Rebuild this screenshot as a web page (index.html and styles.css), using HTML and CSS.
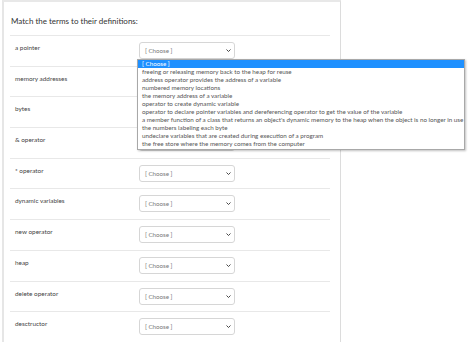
FILE: index.html
```html
<!DOCTYPE html>
<html lang="en">
<head>
    <meta charset="UTF-8">
    <title>Match the terms</title>
    <link rel="stylesheet" href="styles.css">
</head>
<body>

    <div class="question">
        <div class="question-text">Match the terms to their definitions:</div>

        <div class="answer-row">
            <div class="term">a pointer</div>
            <div class="select">[ Choose ]<svg class="chevron" viewBox="0 0 10 6"><path d="M1 1 L5 5 L9 1"/></svg></div>
        </div>
        <div class="answer-row">
            <div class="term">memory addresses</div>
            <div class="select">[ Choose ]<svg class="chevron" viewBox="0 0 10 6"><path d="M1 1 L5 5 L9 1"/></svg></div>
        </div>
        <div class="answer-row">
            <div class="term">bytes</div>
            <div class="select">[ Choose ]<svg class="chevron" viewBox="0 0 10 6"><path d="M1 1 L5 5 L9 1"/></svg></div>
        </div>
        <div class="answer-row">
            <div class="term">&amp; operator</div>
            <div class="select">[ Choose ]<svg class="chevron" viewBox="0 0 10 6"><path d="M1 1 L5 5 L9 1"/></svg></div>
        </div>
        <div class="answer-row">
            <div class="term">* operator</div>
            <div class="select">[ Choose ]<svg class="chevron" viewBox="0 0 10 6"><path d="M1 1 L5 5 L9 1"/></svg></div>
        </div>
        <div class="answer-row">
            <div class="term">dynamic variables</div>
            <div class="select">[ Choose ]<svg class="chevron" viewBox="0 0 10 6"><path d="M1 1 L5 5 L9 1"/></svg></div>
        </div>
        <div class="answer-row">
            <div class="term">new operator</div>
            <div class="select">[ Choose ]<svg class="chevron" viewBox="0 0 10 6"><path d="M1 1 L5 5 L9 1"/></svg></div>
        </div>
        <div class="answer-row">
            <div class="term">heap</div>
            <div class="select">[ Choose ]<svg class="chevron" viewBox="0 0 10 6"><path d="M1 1 L5 5 L9 1"/></svg></div>
        </div>
        <div class="answer-row">
            <div class="term">delete operator</div>
            <div class="select">[ Choose ]<svg class="chevron" viewBox="0 0 10 6"><path d="M1 1 L5 5 L9 1"/></svg></div>
        </div>
        <div class="answer-row">
            <div class="term">desctructor</div>
            <div class="select">[ Choose ]<svg class="chevron" viewBox="0 0 10 6"><path d="M1 1 L5 5 L9 1"/></svg></div>
        </div>
    </div>

    <ul class="dropdown">
        <li class="selected">[ Choose ]</li>
        <li>freeing or releasing memory back to the heap for reuse</li>
        <li>address operator provides the address of a variable</li>
        <li>numbered memory locations</li>
        <li>the memory address of a variable</li>
        <li>operator to create dynamic variable</li>
        <li>operator to declare pointer variables and dereferencing operator to get the value of the variable</li>
        <li>a member function of a class that returns an object's dynamic memory to the heap when the object is no longer in use</li>
        <li>the numbers labeling each byte</li>
        <li>undeclare variables that are created during execution of a program</li>
        <li>the free store where the memory comes from the computer</li>
    </ul>

</body>
</html>
```

FILE: styles.css
```css
body {
    font-family: 'Lato', 'Liberation Sans', sans-serif;
    margin: 0;
    padding: 0;
    background-color: #ffffff;
    color: #2d3b45;
}

.question {
    width: 320px;
    margin-left: 2px;
    padding: 0 10px 0 6px;
    border-top: 2px solid #e8e8e8;
    border-left: 2px solid #e6e6e6;
    border-right: 1px solid #dcdcdc;
}

.question-text {
    height: 33px;
    padding: 0 0 0 1px;
    font-size: 8px;
    line-height: 38px;
    color: #333333;
}

.answer-row {
    display: flex;
    height: 29.7px;
    border-top: 1px solid #e8e8e8;
}

.term {
    width: 124px;
    padding: 8px 0 0 5px;
    font-size: 6.4px;
    color: #444444;
}

.select {
    display: flex;
    justify-content: space-between;
    align-items: center;
    box-sizing: border-box;
    width: 96px;
    height: 17px;
    margin-top: 6px;
    padding: 0 3px 0 5px;
    border: 1px solid #d6d6d6;
    border-radius: 3px;
    font-size: 6.2px;
    color: #777777;
    background-color: #ffffff;
}

.chevron {
    width: 5px;
    height: 3px;
    fill: none;
    stroke: #333333;
    stroke-width: 1.8;
}

.dropdown {
    position: absolute;
    top: 59px;
    left: 137px;
    width: 326px;
    margin: 0;
    padding: 0 0 1px;
    list-style: none;
    background-color: #ffffff;
    border: 1px solid #a8a8a8;
    box-shadow: 1px 1px 2px rgba(0, 0, 0, 0.25);
}

.dropdown li {
    height: 8px;
    padding-left: 4px;
    font-size: 6.25px;
    line-height: 8px;
    color: #555555;
    white-space: nowrap;
}

.dropdown li.selected {
    background-color: #1e90ff;
    color: #ffffff;
}
```
